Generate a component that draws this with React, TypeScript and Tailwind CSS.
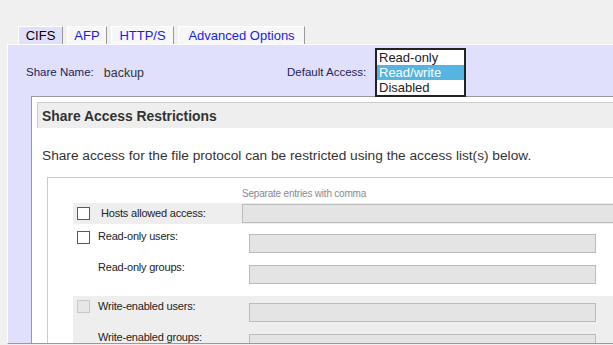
import type { JSX } from 'react';

// Share settings page: protocol tabs, share name row, and the access list
// form, with the "Default Access" select shown open.

interface Tab {
  readonly label: string;
  readonly widthClass: string;
  readonly active: boolean;
}

const TABS: readonly Tab[] = [
  { label: 'CIFS', widthClass: 'w-[45px]', active: true },
  { label: 'AFP', widthClass: 'w-[40px]', active: false },
  { label: 'HTTP/S', widthClass: 'w-[63px]', active: false },
  { label: 'Advanced Options', widthClass: 'w-[127px]', active: false },
];

const ACCESS_OPTIONS = ['Read-only', 'Read/write', 'Disabled'] as const;

const Checkbox = ({ disabled = false }: { readonly disabled?: boolean }): JSX.Element => (
  <span
    className={
      disabled
        ? 'block h-[13px] w-[13px] shrink-0 border border-[#c8c8c8] bg-[#e6e6e6]'
        : 'block h-[13px] w-[13px] shrink-0 border border-[#5a5a5a] bg-white'
    }
  />
);

const Field = ({ className }: { readonly className: string }): JSX.Element => (
  <span className={`block h-[19px] shrink-0 border border-[#bbbbbb] bg-[#e4e4e4] ${className}`} />
);

interface ListRow {
  readonly label: string;
  readonly checkbox: 'on' | 'off' | 'none';
  readonly heightClass: string;
}

const ListRowView = ({
  row,
  offsets,
}: {
  readonly row: ListRow;
  readonly offsets: { readonly box: string; readonly label: string; readonly field: string };
}): JSX.Element => (
  <div className={`flex items-start ${row.heightClass}`}>
    <div className={`ml-[4px] w-[13px] shrink-0 ${offsets.box}`}>
      {row.checkbox === 'none' ? null : <Checkbox disabled={row.checkbox === 'off'} />}
    </div>
    <span
      className={`ml-[8px] w-[151px] shrink-0 text-[11px] leading-[13px] tracking-[-0.2px] text-[#222] ${offsets.label}`}
    >
      {row.label}
    </span>
    <Field className={`w-[347px] ${offsets.field}`} />
  </div>
);

export default function App(): JSX.Element {
  return (
    <div className="relative h-[345px] w-[613px] overflow-hidden bg-[#f0f0f0] font-['Liberation_Sans',Arial,sans-serif]">
      <div className="flex gap-[4px] pl-[18px] pt-[26px]">
        {TABS.map((tab) => (
          <div
            key={tab.label}
            className={`flex h-[18px] items-center justify-center border-l border-r border-t border-l-white border-r-[#999] border-t-white text-[13px] ${tab.widthClass} ${
              tab.active ? 'bg-[#e0e0fc] text-black' : 'bg-[#f7f7f7] text-[#1a1aee]'
            }`}
          >
            {tab.label}
          </div>
        ))}
      </div>

      <div className="ml-[7px] h-[300px] w-[620px] overflow-hidden border-b border-l border-t border-b-[#999] border-l-white border-t-white bg-[#e0e0fc]">
        <div className="flex h-[51px] items-center pl-[18px] pt-[5px] text-[11.5px]">
          <div className="flex w-[261px] shrink-0">
            <span className="text-[#22225a]">Share Name:</span>
            <span className="ml-[10px] text-[12.5px] text-[#333]">backup</span>
          </div>
          <span className="text-[#22225a]">Default Access:</span>
        </div>

        <div className="ml-[23px] h-[260px] border-l border-t border-[#999] bg-white pl-[5px] pt-[5px]">
          <div className="flex h-[26px] items-center border-l border-t border-[#ccc] bg-[#eee] pl-[4px] pt-[1px] text-[13.9px] font-bold text-[#333]">
            Share Access Restrictions
          </div>
          <p className="mt-[20px] pl-[5px] text-[13.7px] leading-[16px] text-[#333]">
            Share access for the file protocol can be restricted using the access list(s) below.
          </p>

          <div className="ml-[10px] mt-[13px] h-[200px] border-l border-t border-[#ccc]">
            <div className="ml-[25px]">
              <div className="h-[25px] pl-[169px] pt-[10px] text-[10px] leading-[12px] tracking-[-0.2px] text-[#8a8a8a]">
                Separate entries with comma
              </div>

              <div className="flex h-[21px] items-center bg-[#eee]">
                <div className="ml-[4px] shrink-0">
                  <Checkbox />
                </div>
                <span className="ml-[11px] w-[141px] shrink-0 text-[11px] leading-[13px] tracking-[-0.2px] text-[#222]">
                  Hosts allowed access:
                </span>
                <Field className="w-[400px]" />
              </div>

              <div>
                <ListRowView
                  row={{ label: 'Read-only users:', checkbox: 'on', heightClass: 'h-[31px]' }}
                  offsets={{ box: 'mt-[7px]', label: 'mt-[6px]', field: 'mt-[10px]' }}
                />
                <ListRowView
                  row={{ label: 'Read-only groups:', checkbox: 'none', heightClass: 'h-[41px]' }}
                  offsets={{ box: 'mt-[7px]', label: 'mt-[6px]', field: 'mt-[10px]' }}
                />
              </div>

              <div className="bg-[#eee]">
                <ListRowView
                  row={{ label: 'Write-enabled users:', checkbox: 'off', heightClass: 'h-[31px]' }}
                  offsets={{ box: 'mt-[4px]', label: 'mt-[4px]', field: 'mt-[7px]' }}
                />
                <ListRowView
                  row={{ label: 'Write-enabled groups:', checkbox: 'none', heightClass: 'h-[31px]' }}
                  offsets={{ box: 'mt-[4px]', label: 'mt-[4px]', field: 'mt-[7px]' }}
                />
              </div>
            </div>
          </div>
        </div>
      </div>

      {/* open listbox of the Default Access select */}
      <ul className="absolute left-[375px] top-[48px] w-[91px] border-2 border-[#222] bg-white text-[13px] leading-[15px] text-[#222]">
        {ACCESS_OPTIONS.map((option) => (
          <li
            key={option}
            className={option === 'Read/write' ? 'bg-[#56b4e3] pl-[2px] text-white' : 'pl-[2px]'}
          >
            {option}
          </li>
        ))}
      </ul>
    </div>
  );
}
